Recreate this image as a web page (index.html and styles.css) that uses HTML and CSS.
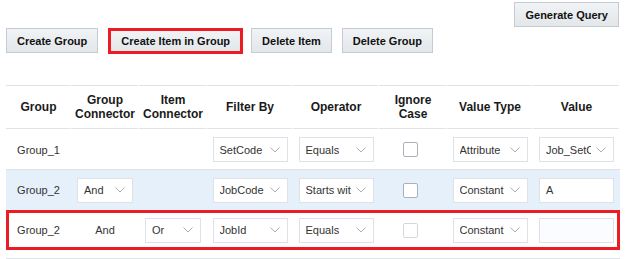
FILE: index.html
```html
<!DOCTYPE html>
<html lang="en">
<head>
  <meta charset="UTF-8">
  <title>Query Builder</title>
  <link rel="stylesheet" href="styles.css">
</head>
<body>
  <div class="page">
    <div class="top-actions">
      <button class="btn">Generate Query</button>
    </div>
    <div class="actions">
      <button class="btn">Create Group</button>
      <button class="btn btn-marked">Create Item in Group</button>
      <button class="btn">Delete Item</button>
      <button class="btn">Delete Group</button>
    </div>

    <div class="grid">
      <!-- header -->
      <div class="grid-row grid-head">
        <div class="cell">Group</div>
        <div class="cell">Group<br>Connector</div>
        <div class="cell">Item<br>Connector</div>
        <div class="cell">Filter By</div>
        <div class="cell">Operator</div>
        <div class="cell">Ignore<br>Case</div>
        <div class="cell">Value Type</div>
        <div class="cell">Value</div>
      </div>

      <div class="grid-body">
        <div class="grid-row">
          <div class="cell">Group_1</div>
          <div class="cell"></div>
          <div class="cell"></div>
          <div class="cell"><div class="select wide"><span class="select-text">SetCode</span><svg class="chev" width="10" height="6" viewBox="0 0 10 6"><path d="M0.5 0.5L5 5L9.5 0.5"/></svg></div></div>
          <div class="cell"><div class="select wide"><span class="select-text">Equals</span><svg class="chev" width="10" height="6" viewBox="0 0 10 6"><path d="M0.5 0.5L5 5L9.5 0.5"/></svg></div></div>
          <div class="cell"><span class="check"></span></div>
          <div class="cell"><div class="select wide"><span class="select-text">Attribute</span><svg class="chev" width="10" height="6" viewBox="0 0 10 6"><path d="M0.5 0.5L5 5L9.5 0.5"/></svg></div></div>
          <div class="cell"><div class="select wide"><span class="select-text">Job_SetCode</span><svg class="chev" width="10" height="6" viewBox="0 0 10 6"><path d="M0.5 0.5L5 5L9.5 0.5"/></svg></div></div>
        </div>

        <div class="grid-row is-current">
          <div class="cell">Group_2</div>
          <div class="cell"><div class="select narrow"><span class="select-text">And</span><svg class="chev" width="10" height="6" viewBox="0 0 10 6"><path d="M0.5 0.5L5 5L9.5 0.5"/></svg></div></div>
          <div class="cell"></div>
          <div class="cell"><div class="select wide"><span class="select-text">JobCode</span><svg class="chev" width="10" height="6" viewBox="0 0 10 6"><path d="M0.5 0.5L5 5L9.5 0.5"/></svg></div></div>
          <div class="cell"><div class="select wide"><span class="select-text">Starts with</span><svg class="chev" width="10" height="6" viewBox="0 0 10 6"><path d="M0.5 0.5L5 5L9.5 0.5"/></svg></div></div>
          <div class="cell"><span class="check"></span></div>
          <div class="cell"><div class="select wide"><span class="select-text">Constant</span><svg class="chev" width="10" height="6" viewBox="0 0 10 6"><path d="M0.5 0.5L5 5L9.5 0.5"/></svg></div></div>
          <div class="cell"><div class="input">A</div></div>
        </div>

        <div class="grid-row is-marked">
          <div class="cell">Group_2</div>
          <div class="cell">And</div>
          <div class="cell"><div class="select narrow"><span class="select-text">Or</span><svg class="chev" width="10" height="6" viewBox="0 0 10 6"><path d="M0.5 0.5L5 5L9.5 0.5"/></svg></div></div>
          <div class="cell"><div class="select wide"><span class="select-text">JobId</span><svg class="chev" width="10" height="6" viewBox="0 0 10 6"><path d="M0.5 0.5L5 5L9.5 0.5"/></svg></div></div>
          <div class="cell"><div class="select wide"><span class="select-text">Equals</span><svg class="chev" width="10" height="6" viewBox="0 0 10 6"><path d="M0.5 0.5L5 5L9.5 0.5"/></svg></div></div>
          <div class="cell"><span class="check check-light"></span></div>
          <div class="cell"><div class="select wide"><span class="select-text">Constant</span><svg class="chev" width="10" height="6" viewBox="0 0 10 6"><path d="M0.5 0.5L5 5L9.5 0.5"/></svg></div></div>
          <div class="cell"><div class="input input-empty"></div></div>
        </div>
      </div>
    </div>
  </div>
</body>
</html>
```

FILE: styles.css
```css
:root {
  --text: #333;
  --line: #dfe3e8;
  --field-border: #dde2e7;
  --marker: #ec1c24;
  --current: #e5f0fb;
}
body {
  margin: 0;
  font-family: 'Liberation Sans', Arial, sans-serif;
  font-size: 11px;
  color: var(--text);
  background: #fff;
}
.page {
  padding: 2px 10px 0 6px;
}
/* Toolbar */
.top-actions {
  display: flex;
  justify-content: flex-end;
}
.actions {
  display: flex;
  align-items: flex-start;
  gap: 10px;
  margin-top: 1px;
}
.btn {
  height: 25px;
  padding: 0 10px;
  font-family: inherit;
  font-size: 11px;
  font-weight: bold;
  color: #111;
  background: linear-gradient(#f1f3f5, #e3e7ea);
  border: 1px solid #c3ccd4;
  border-radius: 0;
  cursor: pointer;
}
.btn-marked {
  height: 26px;
  border: 3px solid var(--marker);
  margin-right: -2px;
}
/* Grid */
.grid {
  width: 614px;
  margin-top: 31px;
}
.grid-row {
  display: grid;
  grid-template-columns: 65px 68px 68px 86px 86px 68px 86px 87px;
  box-sizing: border-box;
  height: 40px;
}
.cell {
  display: flex;
  align-items: center;
  justify-content: center;
  text-align: center;
  white-space: nowrap;
}
.grid-head {
  height: 44px;
}
.grid-head .cell {
  font-size: 12px;
  font-weight: bold;
  line-height: 14px;
  color: #1a1a1a;
  background:
    linear-gradient(var(--line), var(--line)) left top / calc(100% - 1px) 1px no-repeat,
    linear-gradient(var(--line), var(--line)) left bottom / calc(100% - 1px) 1px no-repeat;
}
.grid-body {
  padding-top: 1px;
  padding-bottom: 8px;
  border-bottom: 1px solid var(--line);
}
.grid-body .grid-row:first-child {
  border-bottom: 1px solid var(--line);
}
.grid-row.is-current {
  background: var(--current);
}
.grid-row.is-marked {
  outline: 3px solid var(--marker);
  outline-offset: -3px;
}
/* Fields */
.select, .input {
  display: flex;
  align-items: center;
  box-sizing: border-box;
  height: 25px;
  padding: 0 7px 0 6px;
  background: #fff;
  border: 1px solid var(--field-border);
  color: var(--text);
  overflow: hidden;
}
.select.wide, .input { width: 75px; }
.select.narrow { width: 56px; }
.select-text {
  flex: 1;
  min-width: 0;
  overflow: hidden;
  text-align: left;
  margin-right: 5px;
}
.chev {
  flex: none;
}
.chev path {
  fill: none;
  stroke: #a9b0b8;
  stroke-width: 1;
}
.input-empty {
  background: #fafcff;
}
.check {
  width: 15px;
  height: 15px;
  box-sizing: border-box;
  border: 1px solid #a9b1b9;
  border-radius: 2px;
  background: #fff;
  margin-right: 5px;
}
.check-light {
  border-color: #d3d8dd;
}
```
